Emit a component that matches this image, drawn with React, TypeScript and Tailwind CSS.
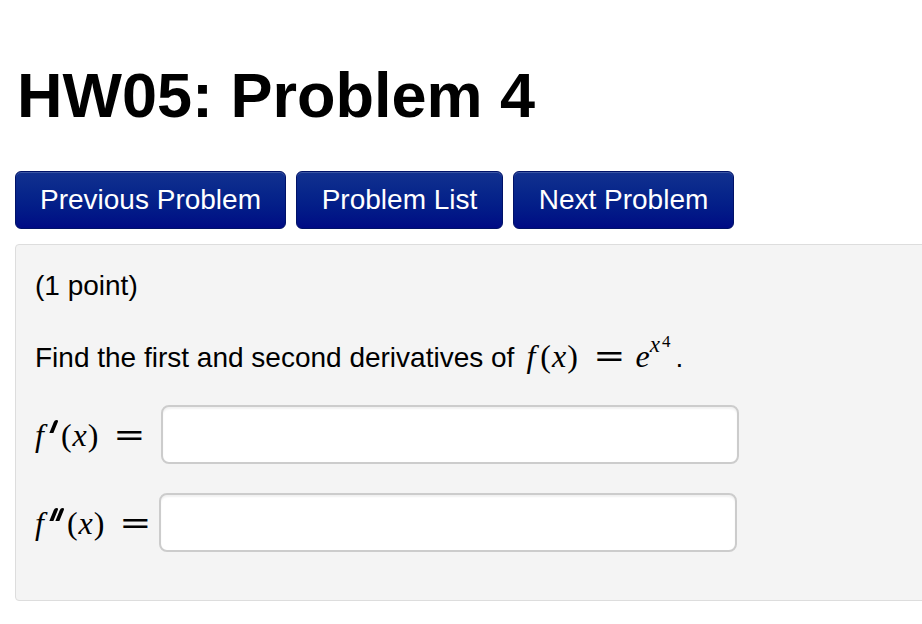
import React from 'react';

const serif = { fontFamily: '"Liberation Serif", "DejaVu Serif", serif' };
const eqFont = { fontFamily: '"DejaVu Serif", "Liberation Serif", serif' };

const NavButton: React.FC<{ label: string; width: string }> = ({ label, width }) => (
  <button
    type="button"
    className={`${width} h-[58px] rounded-[6px] border border-[#001268] bg-gradient-to-b from-[#12318f] to-[#000a84] text-white text-[28px] leading-none shadow-[inset_0_1px_0_rgba(255,255,255,0.18)]`}
  >
    {label}
  </button>
);

// slanted stroke used for the prime marks
const Tick = () => (
  <span className="inline-block w-[4px] h-[13px] bg-black rounded-t-full -skew-x-[22deg] relative -top-[13px] mr-[2px]" />
);

const Equals: React.FC<{ className?: string }> = ({ className = '' }) => (
  <span className={`inline-block scale-x-[1.2] ${className}`} style={eqFont}>
    =
  </span>
);

const Label: React.FC<{ primes: number }> = ({ primes }) => (
  <span className="inline-flex items-baseline text-[32px] leading-none" style={serif}>
    <i>f</i>
    <span className="ml-[8px] mr-[3px]">
      {Array.from({ length: primes }).map((_, i) => (
        <Tick key={i} />
      ))}
    </span>
    <span>(</span>
    <i className="ml-[1px]">x</i>
    <span className="ml-[1px]">)</span>
    <Equals className="ml-[18px]" />
  </span>
);

const AnswerInput: React.FC<{ id: string }> = ({ id }) => (
  <input
    id={id}
    type="text"
    className="w-[578px] h-[59px] bg-white border-2 border-[#cccccc] rounded-[8px] px-3 text-[24px] shadow-[inset_0_2px_2px_rgba(0,0,0,0.06)] focus:outline-none"
  />
);

export default function App() {
  return (
    <div
      className="min-h-screen bg-white text-black overflow-hidden pl-[15px]"
      style={{ fontFamily: '"Liberation Sans", Arial, sans-serif' }}
    >
      <h1 className="pt-[64px] text-[63px] font-bold leading-none pl-[2px]">HW05: Problem 4</h1>

      <div className="flex gap-[10px] mt-[44px]">
        <NavButton label="Previous Problem" width="w-[271px]" />
        <NavButton label="Problem List" width="w-[207px]" />
        <NavButton label="Next Problem" width="w-[221px]" />
      </div>

      <div className="mt-[15px] w-[930px] bg-[#f4f4f4] border border-[#dddddd] rounded-[4px] pl-[19px] pt-[21px] pb-[48px] text-[28px]">
        <p className="leading-[40px]">(1 point)</p>

        <p className="leading-[40px] mt-[30px] flex items-baseline">
          <span>Find the first and second derivatives of</span>
          <span style={serif} className="text-[32px] ml-[12px] inline-flex items-baseline">
            <i>f</i>
            <span className="ml-[5px]">(</span>
            <i className="ml-[1px]">x</i>
            <span className="ml-[1px]">)</span>
            <Equals className="ml-[18px]" />
            <i className="ml-[13px]">e</i>
            <span className="relative -top-[15px] text-[23px] inline-flex items-baseline">
              <i>x</i>
              <span className="text-[17px] relative -top-[5px] ml-[2px]">4</span>
            </span>
          </span>
          <span className="ml-[5px]">.</span>
        </p>

        <div className="flex items-center mt-[23px]">
          <Label primes={1} />
          <span className="w-[18px]" />
          <AnswerInput id="fp" />
        </div>

        <div className="flex items-center mt-[29px]">
          <Label primes={2} />
          <span className="w-[10px]" />
          <AnswerInput id="fpp" />
        </div>
      </div>
    </div>
  );
}
